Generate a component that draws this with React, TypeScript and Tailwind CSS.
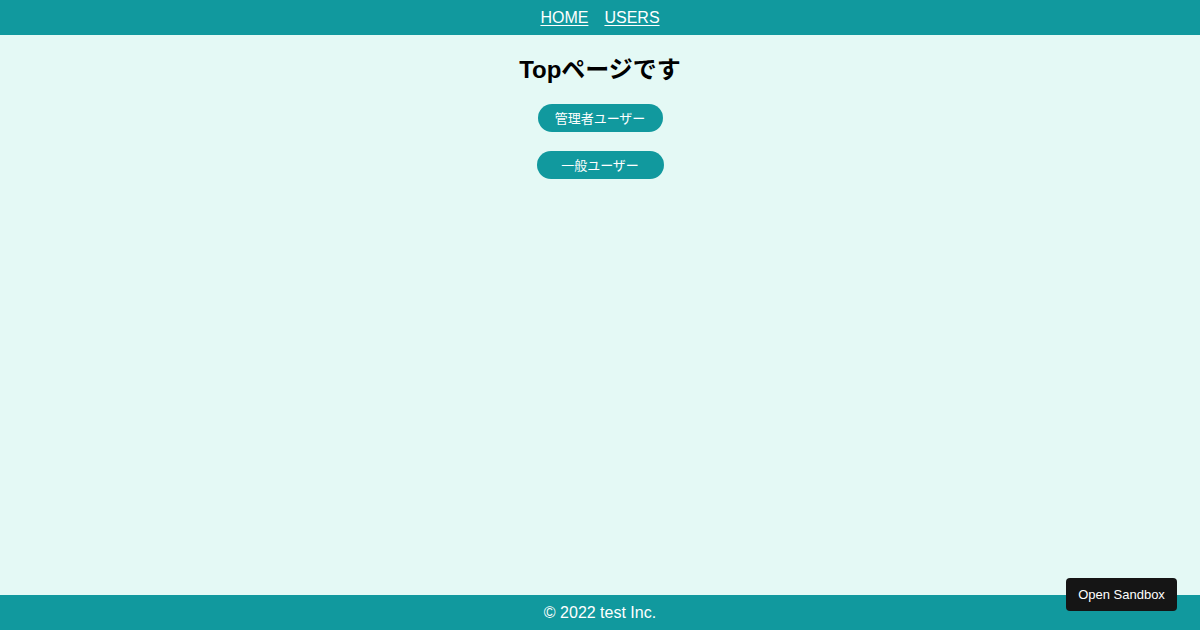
import React from "react";

export default function App() {
  return (
    <div
      className="min-h-screen flex flex-col bg-[#e4f9f5] text-black"
      style={{ fontFamily: '"Liberation Sans", Arial, "Noto Sans CJK JP", sans-serif' }}
    >
      <header className="h-[35px] bg-[#11999e] flex items-center justify-center gap-4 text-white text-base">
        <a href="#" className="underline underline-offset-2">HOME</a>
        <a href="#" className="underline underline-offset-2">USERS</a>
      </header>
      <main className="flex-1 flex flex-col items-center">
        <h1 className="mt-[20px] mb-0 text-[24px] leading-[30px] font-bold">Topページです</h1>
        <div className="flex flex-col items-center gap-[19px] mt-[19px]">
          <button className="w-[125px] h-[28px] rounded-full bg-[#11999e] text-white text-[13px] leading-none flex items-center justify-center">
            管理者ユーザー
          </button>
          <button className="w-[127px] h-[28px] rounded-full bg-[#11999e] text-white text-[13px] leading-none flex items-center justify-center">
            一般ユーザー
          </button>
        </div>
      </main>
      <footer className="h-[35px] bg-[#11999e] flex items-center justify-center text-white text-base">
        © 2022 test Inc.
      </footer>
      <button className="fixed right-[23px] bottom-[19px] w-[111px] h-[33px] rounded-[4px] bg-[#151515] text-white text-[13px] flex items-center justify-center">
        Open Sandbox
      </button>
    </div>
  );
}
